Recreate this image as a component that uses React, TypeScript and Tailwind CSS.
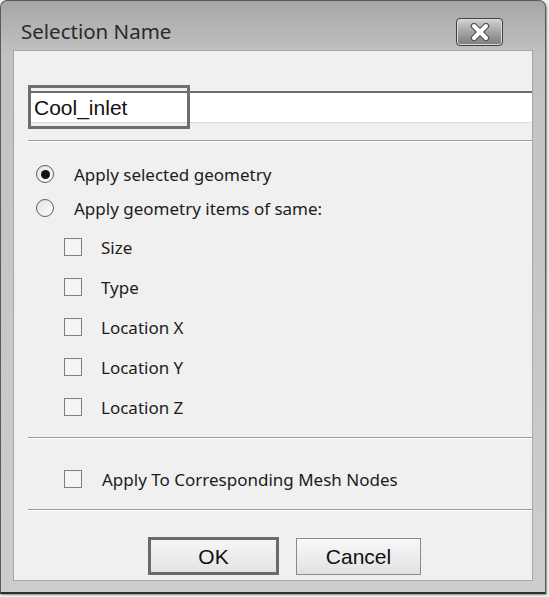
import React from "react";

const ui = { fontFamily: '"Noto Sans", "Liberation Sans", sans-serif' };
const btnFont = { fontFamily: '"Liberation Sans", Arial, sans-serif' };

function Radio({ checked, label }: { checked?: boolean; label: string }) {
  return (
    <div className="flex items-center h-[24px] pl-[22px]">
      <div className="w-[18px] h-[18px] rounded-full border-[1.5px] border-[#5e5e5e] bg-gradient-to-br from-[#e2e2e2] to-[#ffffff] flex items-center justify-center">
        {checked && <div className="w-[9px] h-[9px] rounded-full bg-[#111]" />}
      </div>
      <span className="ml-[20px] text-[17px] text-[#1c1c1c] leading-none">{label}</span>
    </div>
  );
}

function Check({ label, ml = "ml-[19px]" }: { label: string; ml?: string }) {
  return (
    <div className="flex items-center h-[24px] pl-[50px]">
      <div className="w-[18px] h-[18px] border-[1.5px] border-[#7e7e7e] bg-[#f5f5f5]" />
      <span className={`${ml} text-[17px] text-[#1c1c1c] leading-none`}>{label}</span>
    </div>
  );
}

function Sep({ className }: { className: string }) {
  return (
    <div className={`ml-[14px] ${className}`}>
      <div className="h-[1px] bg-[#9c9c9c]" />
      <div className="h-[1px] bg-[#ffffff]" />
    </div>
  );
}

export default function App() {
  return (
    <div className="w-[549px] h-[597px] bg-[#f4f4f4] relative overflow-hidden" style={ui}>
      <div className="w-[546px] h-[594px] rounded-t-[7px] border border-[#5a5a5a] border-b-[2px] border-b-[#2e2e2e] bg-gradient-to-b from-[#a6a6a6] via-[#c2c2c2] via-[9%] to-[#cdcdcd] flex flex-col px-[12px] pb-[11px] shadow-[1px_1px_2px_#888]">
        <div className="h-[49px] flex items-center justify-between shrink-0">
          <span className="ml-[8px] mt-[12px] text-[20.5px] text-[#2a2a2a]">Selection Name</span>
          <div className="mt-[12px] mr-[30px] w-[47px] h-[28px] rounded-[4px] border border-[#404040] bg-gradient-to-b from-[#d4d4d4] via-[#a4a4a4] to-[#7c7c7c] flex items-center justify-center shadow-[inset_0_0_0_1px_#dcdcdc]">
            <svg width="24" height="18" viewBox="0 0 24 18">
              <path d="M6 3 L18 15 M18 3 L6 15" stroke="#555555" strokeWidth="6.5" strokeLinecap="round" />
              <path d="M6 3 L18 15 M18 3 L6 15" stroke="#ffffff" strokeWidth="4" strokeLinecap="round" />
            </svg>
          </div>
        </div>
        <div className="flex-1 bg-[#f0f0f0] border border-[#a8a8a8] flex flex-col">
          <div className="relative mt-[34px] h-[44px] ml-[14px]">
            <div className="absolute left-[2px] right-0 top-[6px] h-[32px] bg-white border-t-[2px] border-t-[#6c6c6c] border-b border-b-[#dcdcdc]" />
            <div className="absolute left-0 top-0 w-[162px] h-[44px] border-[3px] border-[#6e6e6e] flex items-center">
              <span className="ml-[3px] text-[21px] text-[#111] leading-none" style={btnFont}>Cool_inlet</span>
            </div>
          </div>
          <Sep className="mt-[11px]" />
          <div className="mt-[20px]">
            <Radio checked label="Apply selected geometry" />
          </div>
          <div className="mt-[10px]">
            <Radio label="Apply geometry items of same:" />
          </div>
          <div className="mt-[15px] flex flex-col gap-[16px]">
            <Check label="Size" />
            <Check label="Type" />
            <Check label="Location X" />
            <Check label="Location Y" />
            <Check label="Location Z" />
          </div>
          <Sep className="mt-[18px]" />
          <div className="mt-[28px]">
            <Check label="Apply To Corresponding Mesh Nodes" ml="ml-[20px]" />
          </div>
          <Sep className="mt-[18px]" />
          <div className="mt-[26px] flex pl-[134px]">
            <div className="w-[131px] h-[38px] border-[3px] border-[#6a6a6a] bg-gradient-to-b from-[#f6f6f6] to-[#e4e4e4] flex items-center justify-center">
              <span className="text-[21px] text-[#111] leading-none" style={btnFont}>OK</span>
            </div>
            <div className="ml-[17px] mt-[1px] w-[125px] h-[37px] border border-[#8a8a8a] bg-gradient-to-b from-[#f8f8f8] to-[#e2e2e2] flex items-center justify-center">
              <span className="text-[21px] text-[#111] leading-none" style={btnFont}>Cancel</span>
            </div>
          </div>
        </div>
      </div>
    </div>
  );
}
